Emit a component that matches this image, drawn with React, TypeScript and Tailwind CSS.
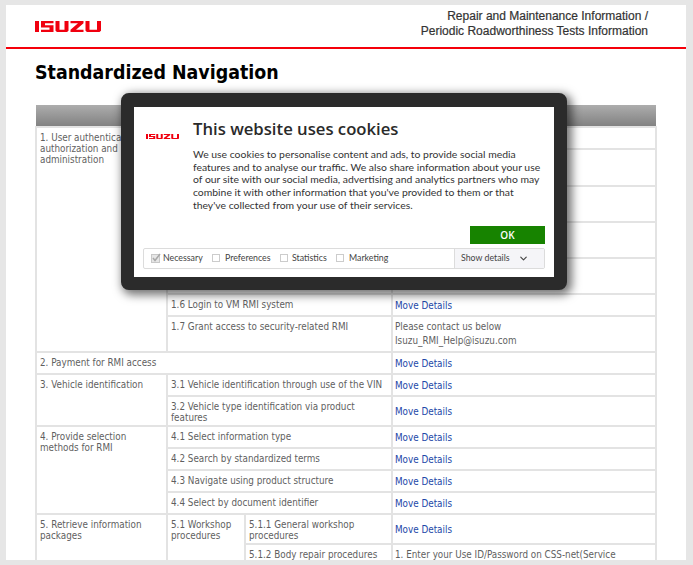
import { ChevronDown } from 'lucide-react'

function IsuzuLogo({ className }: { className: string }) {
  // wordmark drawn from blocks, the way the logo is cut
  return (
    <svg viewBox="0 0 66 12" preserveAspectRatio="none" className={className} fill="#f0000f">
      <path d="M0 0h4v12H0z" />
      <path d="M6 0h12.500v2.500H10v2.200h8.500V12H6V9.500h8.500V7.200H6z" />
      <path d="M20.500 0h4v9.500h5V0h4v10.500L32 12H22l-1.500-1.500z" />
      <path d="M35.500 0h13v2.500L41 9.500h7.500V12h-13V9.500L43 2.500h-7.500z" />
      <path d="M50.500 0h4v9.500h7.500V0h4v10.500L64.500 12H52l-1.500-1.500z" />
    </svg>
  )
}

function MoveDetails() {
  return <a className="text-[#1d47a8]">Move Details</a>
}

const td = 'border-2 border-[#e3e3e3] align-top pl-[3px] pr-[2px] pt-[4px] pb-0 leading-[11px]'
const link = 'border-2 border-[#e3e3e3] align-middle pl-[2px] pr-[2px] py-[2px] leading-[11px]'

export default function App() {
  return (
    <div className="relative h-[565px] w-[693px] overflow-hidden bg-[#e6e6e6] font-['DejaVu_Sans_Condensed','DejaVu_Sans',sans-serif]">
      <div className="ml-[6px] mt-[5px] h-[555px] w-[680px] overflow-hidden bg-white">
        <header className="flex h-[44px] items-center justify-between border-b-2 border-[#f5000a] pl-[29px] pr-[38px]">
          <IsuzuLogo className="h-[11px] w-[66px]" />
          <div className="mb-[4px] text-right font-['Liberation_Sans',sans-serif] text-[12px] leading-[15px] text-[#333333] [-webkit-text-stroke:0.2px]">
            <div>Repair and Maintenance Information /</div>
            <div>Periodic Roadworthiness Tests Information</div>
          </div>
        </header>
        <h1 className="ml-[29px] mt-[12px] text-[19.400px] font-bold leading-[24px] text-black">Standardized Navigation</h1>
        <table className="ml-[29px] mt-[20px] w-[620px] table-fixed border-collapse text-[9.800px] text-[#5f5f5f]">
          <colgroup>
            <col className="w-[131px]" />
            <col className="w-[78px]" />
            <col className="w-[147px]" />
            <col className="w-[264px]" />
          </colgroup>
          <tbody>
            <tr className="h-[22px]">
              <th colSpan={4} className="bg-gradient-to-b from-[#adadad] to-[#828282]" />
            </tr>
            <tr className="h-[22px]">
              <td rowSpan={7} className={td}>
                1. User authentication, authorization and administration
              </td>
              <td colSpan={2} className={td} />
              <td className={link} />
            </tr>
            <tr className="h-[37px]"><td colSpan={2} className={td} /><td className={link} /></tr>
            <tr className="h-[36px]"><td colSpan={2} className={td} /><td className={link} /></tr>
            <tr className="h-[36px]"><td colSpan={2} className={td} /><td className={link} /></tr>
            <tr className="h-[36px]"><td colSpan={2} className={td} /><td className={link} /></tr>
            <tr className="h-[22px]">
              <td colSpan={2} className={td}>1.6 Login to VM RMI system</td>
              <td className={link}><MoveDetails /></td>
            </tr>
            <tr className="h-[36px]">
              <td colSpan={2} className={td}>1.7 Grant access to security-related RMI</td>
              <td className={`${link} !leading-[14px]`}>
                Please contact us below
                <br />
                Isuzu_RMI_Help@isuzu.com
              </td>
            </tr>
            <tr className="h-[22px]">
              <td colSpan={3} className={td}>2. Payment for RMI access</td>
              <td className={link}><MoveDetails /></td>
            </tr>
            <tr className="h-[22px]">
              <td rowSpan={2} className={td}>3. Vehicle identification</td>
              <td colSpan={2} className={td}>3.1 Vehicle identification through use of the VIN</td>
              <td className={link}><MoveDetails /></td>
            </tr>
            <tr className="h-[30px]">
              <td colSpan={2} className={td}>3.2 Vehicle type identification via product features</td>
              <td className={link}><MoveDetails /></td>
            </tr>
            <tr className="h-[22px]">
              <td rowSpan={4} className={td}>4. Provide selection methods for RMI</td>
              <td colSpan={2} className={td}>4.1 Select information type</td>
              <td className={link}><MoveDetails /></td>
            </tr>
            <tr className="h-[22px]">
              <td colSpan={2} className={td}>4.2 Search by standardized terms</td>
              <td className={link}><MoveDetails /></td>
            </tr>
            <tr className="h-[22px]">
              <td colSpan={2} className={td}>4.3 Navigate using product structure</td>
              <td className={link}><MoveDetails /></td>
            </tr>
            <tr className="h-[22px]">
              <td colSpan={2} className={td}>4.4 Select by document identifier</td>
              <td className={link}><MoveDetails /></td>
            </tr>
            <tr className="h-[30px]">
              <td rowSpan={2} className={td}>5. Retrieve information packages</td>
              <td rowSpan={2} className={td}>5.1 Workshop procedures</td>
              <td className={td}>5.1.1 General workshop procedures</td>
              <td className={link}><MoveDetails /></td>
            </tr>
            <tr className="h-[22px]">
              <td className={td}>5.1.2 Body repair procedures</td>
              <td className={`${td} !pl-[2px] whitespace-nowrap`}>1. Enter your Use ID/Password on CSS-net(Service</td>
            </tr>
          </tbody>
        </table>
      </div>

      {/* cookie dialog */}
      <div className="absolute left-[121px] top-[93px] h-[197px] w-[446px] rounded-[8px] border-[13px] border-t-[14px] border-[#2b2b2b] bg-white font-['Lato',sans-serif] text-[#333333] shadow-[3px_3px_10px_2px_rgba(0,0,0,0.55)]">
        <div className="flex pl-[12px] pr-[14px] pt-[11px]">
          <IsuzuLogo className="mt-[16px] h-[5px] w-[33px] shrink-0" />
          <div className="ml-[14px]">
            <h2 className="font-['Open_Sans',sans-serif] text-[16.700px] font-semibold leading-[22px] text-[#2a2a2a]">This website uses cookies</h2>
            <p className="mt-[8px] w-[350px] text-[10.400px] leading-[12.700px] text-[#333333]">
              We use cookies to personalise content and ads, to provide social media features and to analyse our traffic. We also share information about your use of our site with our social media, advertising and analytics partners who may combine it with other information that you've provided to them or that they've collected from your use of their services.
            </p>
          </div>
        </div>
        <div className="mr-[9px] mt-[14px] flex justify-end">
          <button className="h-[18px] w-[75px] bg-[#178300] font-['Open_Sans',sans-serif] text-[10px] font-semibold leading-[18px] text-white">OK</button>
        </div>
        <div className="ml-[9px] mr-[9px] mt-[4px] flex h-[21px] items-center rounded-[2px] border border-[#dcdcdc] text-[8.800px] text-[#444444]">
          <div className="flex flex-1 items-center pl-[7px]">
            <svg viewBox="0 0 10 10" className="h-[10px] w-[10px] shrink-0">
              <rect x="0.500" y="1.500" width="8" height="8" fill="#e6e6e6" stroke="#c8c8c8" />
              <path d="M2 5l2 2.500L9 1" fill="none" stroke="#a8a8a8" strokeWidth="1.500" />
            </svg>
            <span className="ml-[2px] w-[39px]">Necessary</span>
            <span className="ml-[10px] h-[8px] w-[8px] border border-[#cccccc]" />
            <span className="ml-[5px] w-[45px]">Preferences</span>
            <span className="ml-[10px] h-[8px] w-[8px] border border-[#cccccc]" />
            <span className="ml-[4px] w-[34px]">Statistics</span>
            <span className="ml-[10px] h-[8px] w-[8px] border border-[#cccccc]" />
            <span className="ml-[5px]">Marketing</span>
          </div>
          <div className="flex h-full w-[90px] items-center border-l border-[#dcdcdc] bg-[#f5f5f8] pl-[6px]">
            Show details
            <ChevronDown className="ml-[8px] h-[11px] w-[11px]" strokeWidth={2.500} />
          </div>
        </div>
      </div>
    </div>
  )
}
